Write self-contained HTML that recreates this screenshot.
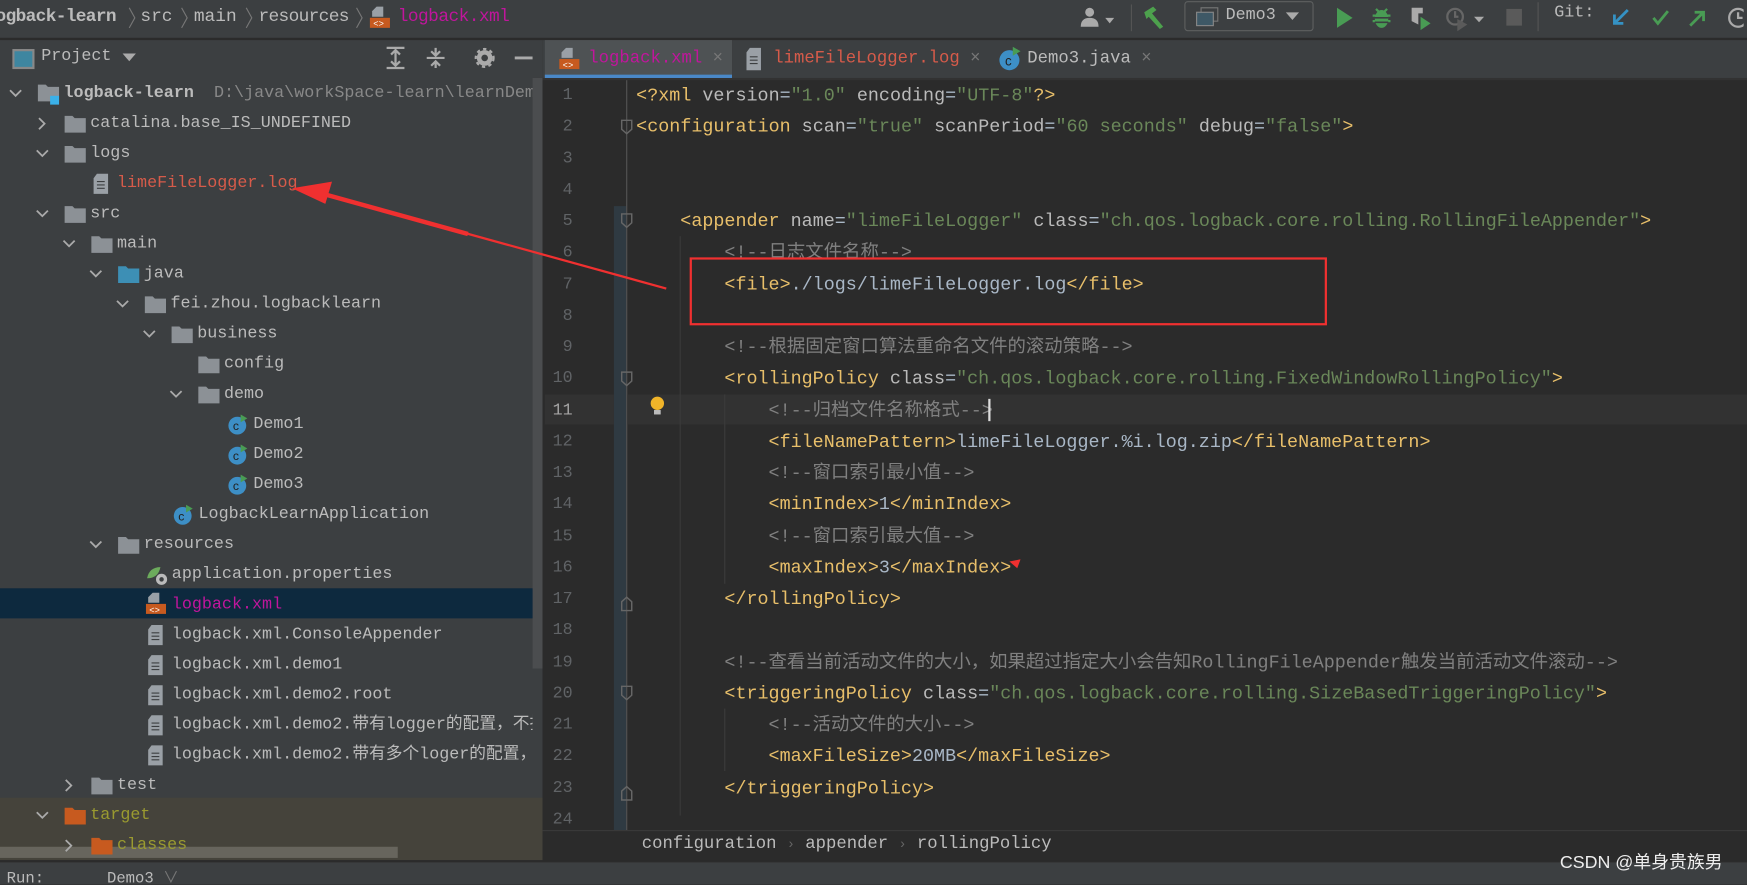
<!DOCTYPE html>
<html><head><meta charset="utf-8"><style>
html,body{margin:0;padding:0;width:1747px;height:884px;overflow:hidden;background:#2b2b2b}
#w{position:absolute;left:0;top:0;width:1568px;height:794px;transform:scale(1.11416);transform-origin:0 0;overflow:hidden;background:#2b2b2b;font-family:"Liberation Mono","Noto Sans CJK SC",monospace}
.a{position:absolute;white-space:nowrap}
.t{color:#bbbbbb;font-size:15px;line-height:27px;height:27px}
.c{font-size:16.5px;line-height:28px;color:#a9b7c6;white-space:pre !important}
.tg{color:#e8bf6a}.at{color:#bababa}.v{color:#6a8759}.cm{color:#808080}
.ln{position:absolute;left:490px;width:24px;text-align:right;color:#606366;font-size:15px;line-height:28px}
.bc{position:absolute;top:4px;font-size:16px;color:#bbb;line-height:22px;white-space:nowrap}
.sep{position:absolute;top:4px;font-size:16px;color:#777;line-height:22px}
</style></head><body><div id="w">
<!-- top bar -->
<div class="a" style="left:0;top:0;width:1568px;height:34px;background:#3c3f41"></div>
<div class="a" style="left:0;top:34px;width:1568px;height:2px;background:#2b2b2b"></div>
<div class="bc" style="left:-4px;font-weight:bold;letter-spacing:-0.6px">ogback-learn</div>
<svg class="a" style="left:114px;top:6px" width="10" height="20"><path d="M2 1l5 9-5 9" stroke="#777" fill="none"/></svg>
<div class="bc" style="left:126px">src</div>
<svg class="a" style="left:161px;top:6px" width="10" height="20"><path d="M2 1l5 9-5 9" stroke="#777" fill="none"/></svg>
<div class="bc" style="left:174px">main</div>
<svg class="a" style="left:219px;top:6px" width="10" height="20"><path d="M2 1l5 9-5 9" stroke="#777" fill="none"/></svg>
<div class="bc" style="left:232px;letter-spacing:-0.6px">resources</div>
<svg class="a" style="left:318px;top:6px" width="10" height="20"><path d="M2 1l5 9-5 9" stroke="#777" fill="none"/></svg>
<svg class="a" style="left:331px;top:5px" width="20" height="22"><path d="M7 1h6v9H3V5z" fill="#9aa0a6"/><rect x="1" y="11" width="18" height="9" fill="#c75a1f"/><text x="4" y="19" font-size="8" fill="#fff" font-family="Liberation Mono">&lt;&gt;</text></svg>
<div class="bc" style="left:357px;color:#c0169c;letter-spacing:-0.5px">logback.xml</div>
<svg class="a" style="left:966px;top:4px" width="40" height="24"><circle cx="12" cy="7" r="4" fill="#aaa"/><path d="M4 20q0-8 8-8 8 0 8 8z" fill="#aaa"/><path d="M26 12h8l-4 5z" fill="#aaa"/></svg>
<div class="a" style="left:1015px;top:4px;width:1px;height:24px;background:#555"></div>
<svg class="a" style="left:1024px;top:4px" width="24" height="24"><path d="M3 7l8-5 3 3-4 3 10 12-3 2-10-11-2 2z" fill="#4da14d"/></svg>
<div class="a" style="left:1063px;top:1px;width:116px;height:27px;border:1px solid #5e6060;border-radius:3px;box-sizing:border-box"></div>
<svg class="a" style="left:1073px;top:6px" width="22" height="18"><rect x="5" y="1" width="15" height="12" fill="none" stroke="#777"/><rect x="1" y="5" width="15" height="12" fill="#3e5866" stroke="#888"/></svg>
<div class="a" style="left:1100px;top:4px;font-size:15px;color:#bbb;line-height:20px">Demo3</div>
<svg class="a" style="left:1154px;top:11px" width="12" height="8"><path d="M0 0h12l-6 7z" fill="#aaa"/></svg>
<svg class="a" style="left:1197px;top:5px" width="20" height="22"><path d="M3 2l14 9-14 9z" fill="#499c54"/></svg>
<svg class="a" style="left:1230px;top:5px" width="20" height="22"><ellipse cx="10" cy="12" rx="6" ry="8" fill="#499c54"/><path d="M2 9h16M2 14h16M5 3l3 3M15 3l-3 3" stroke="#499c54" stroke-width="2"/><path d="M4 11h12M4 15h12" stroke="#3c3f41" stroke-width="1.5"/></svg>
<svg class="a" style="left:1264px;top:5px" width="24" height="24"><path d="M3 2h10v5H9v10l-6-3z" fill="#aaa"/><path d="M11 10l9 6-9 6z" fill="#499c54"/></svg>
<svg class="a" style="left:1297px;top:5px" width="36" height="24"><circle cx="9" cy="10" r="7" fill="none" stroke="#666" stroke-width="2"/><path d="M9 5v5h3" stroke="#666" stroke-width="2" fill="none"/><path d="M11 12l9 5-9 6z" fill="#5a5a5a"/><path d="M26 10h9l-4.5 5z" fill="#aaa"/></svg>
<div class="a" style="left:1352px;top:8px;width:14px;height:15px;background:#5a5a5a"></div>
<div class="a" style="left:1380px;top:2px;width:1px;height:26px;background:#555"></div>
<div class="a" style="left:1395px;top:2px;font-size:15px;color:#bbb;line-height:20px">Git:</div>
<svg class="a" style="left:1445px;top:5px" width="120" height="22"><path d="M16 4L4 16M4 8v8h8" stroke="#3592c4" stroke-width="2.5" fill="none"/><path d="M39 11l4 5 9-11" stroke="#499c54" stroke-width="2.5" fill="none"/><path d="M72 18L84 6M76 6h8v8" stroke="#499c54" stroke-width="2.5" fill="none"/><circle cx="115" cy="11" r="8" fill="none" stroke="#aaa" stroke-width="2"/><path d="M115 6v5h4" stroke="#aaa" stroke-width="2" fill="none"/></svg>

<!-- left panel -->
<div class="a" style="left:0;top:36px;width:487px;height:736px;background:#3c3f41"></div>
<svg class="a" style="left:11px;top:43px" width="20" height="20"><rect x="1" y="2" width="18" height="16" fill="#3e86a0" stroke="#888" stroke-width="2"/></svg>
<div class="a" style="left:37px;top:41px;font-size:15px;color:#bbb;line-height:20px">Project</div>
<svg class="a" style="left:110px;top:48px" width="14" height="9"><path d="M0 0h12l-6 7z" fill="#aaa"/></svg>
<svg class="a" style="left:345px;top:41px" width="140" height="22"><path d="M2 2h16M2 20h16M10 5v12M6 8l4-4 4 4M6 14l4 4 4-4" stroke="#aaa" stroke-width="2" fill="none"/><path d="M38 11h16M46 2v6M46 14v6M42 5l4 4 4-4M42 18l4-4 4 4" stroke="#aaa" stroke-width="2" fill="none"/><circle cx="90" cy="11" r="5" fill="none" stroke="#aaa" stroke-width="4"/><circle cx="90" cy="11" r="8" fill="none" stroke="#aaa" stroke-width="2" stroke-dasharray="3 3"/><path d="M117 11h16" stroke="#aaa" stroke-width="2.5"/></svg>
<div class="a" style="left:478px;top:70px;width:9px;height:530px;background:#4b4d4f"></div>
<div class="a" style="left:0;top:528px;width:478px;height:27px;background:#0d293e"></div>
<div class="a" style="left:0;top:716px;width:487px;height:56px;background:#45433b"></div>
<div class="a" style="left:0;top:760px;width:357px;height:10px;background:#67655d"></div>

<div id="tree"></div>

<!-- editor -->
<div class="a" style="left:487px;top:36px;width:1081px;height:34px;background:#3c3f41"></div>
<div class="a" style="left:489px;top:36px;width:168px;height:34px;background:#4e5254"></div>
<div class="a" style="left:489px;top:67px;width:168px;height:4px;background:#4a88c7"></div>
<svg class="a" style="left:501px;top:42px" width="20" height="22"><path d="M7 1h6v9H3V5z" fill="#9aa0a6"/><rect x="1" y="11" width="18" height="9" fill="#c75a1f"/><text x="4" y="19" font-size="8" fill="#fff" font-family="Liberation Mono">&lt;&gt;</text></svg>
<div class="a" style="left:528px;top:41px;font-size:15.5px;color:#c0169c;line-height:22px">logback.xml <span style="color:#777">×</span></div>
<svg class="a" style="left:669px;top:42px" width="16" height="22"><path d="M4 1h10v20H1V5z" fill="#9aa0a6"/><path d="M4 9h7M4 12h7M4 15h7" stroke="#3c3f41"/></svg>
<div class="a" style="left:694px;top:41px;font-size:15.5px;color:#d65b4a;line-height:22px">limeFileLogger.log <span style="color:#777">×</span></div>
<svg class="a" style="left:896px;top:42px" width="22" height="22"><circle cx="10" cy="12" r="9" fill="#3d8fc6"/><text x="6" y="17" font-size="12" fill="#222" font-family="Liberation Sans">c</text><path d="M13 0l7 4-7 4z" fill="#499c54"/></svg>
<div class="a" style="left:922px;top:41px;font-size:15.5px;color:#bbb;line-height:22px">Demo3.java <span style="color:#777">×</span></div>
<div class="a" style="left:487px;top:70px;width:1081px;height:2px;background:#323232"></div>
<div class="a" style="left:487px;top:72px;width:75px;height:673px;background:#2b2b2b"></div>
<div class="a" style="left:551px;top:185px;width:11px;height:560px;background:#2f3a42"></div>
<div class="a" style="left:562px;top:72px;width:1px;height:673px;background:#555"></div>
<div class="a" style="left:563px;top:354px;width:1005px;height:27px;background:#323232"></div>
<div class="a" style="left:489px;top:354px;width:62px;height:27px;background:#323232"></div>
<div class="a" style="left:610px;top:212px;width:1px;height:520px;background:#3b3b3b"></div>
<div class="a" style="left:650px;top:354px;width:1px;height:170px;background:#3b3b3b"></div>
<div class="a" style="left:650px;top:636px;width:1px;height:56px;background:#3b3b3b"></div>
<div id="ed"></div>
<!-- fold markers -->
<svg class="a" style="left:556px;top:106px" width="14" height="620"><g fill="none" stroke="#666" stroke-width="1.3"><path d="M2 2h9v8l-4.5 4L2 10z"/><path d="M2 86h9v8l-4.5 4L2 94z"/><path d="M2 228h9v8l-4.5 4L2 236z"/><path d="M2 434l4.5-4 4.5 4v8H2z"/><path d="M2 510h9v8l-4.5 4L2 518z"/><path d="M2 604l4.5-4 4.5 4v8H2z"/></g></svg>
<svg class="a" style="left:581px;top:355px" width="18" height="20"><circle cx="9" cy="7" r="6" fill="#f0b429"/><rect x="6" y="13" width="6" height="4" fill="#bbb"/></svg>
<div class="a" style="left:887px;top:358px;width:2px;height:20px;background:#ddd"></div>
<svg class="a" style="left:906px;top:502px" width="12" height="10"><path d="M0 2l10 -2-3 8z" fill="#f03030"/></svg>
<!-- red box & arrow -->
<div class="a" style="left:619px;top:231px;width:572px;height:61px;border:2px solid #f03030;box-sizing:border-box"></div>
<svg class="a" style="left:0;top:0" width="1568" height="794"><path d="M598 259L290 174" stroke="#f03030" stroke-width="2"/><path d="M420 210L290 174" stroke="#f03030" stroke-width="4"/><path d="M262 169l36-6-6 20z" fill="#f03030"/></svg>
<!-- bottom breadcrumb -->
<div class="a" style="left:487px;top:745px;width:1081px;height:27px;background:#2b2b2b;border-top:1px solid #3a3a3a"></div>
<div class="a" style="left:576px;top:746px;font-size:15.5px;color:#bbb;line-height:22px">configuration <span style="color:#666;font-size:12px">›</span> appender <span style="color:#666;font-size:12px">›</span> rollingPolicy</div>
<div class="a" style="left:0;top:772px;width:1568px;height:2px;background:#2b2b2b"></div>
<div class="a" style="left:0;top:774px;width:1568px;height:20px;background:#3c3f41"></div>
<div class="a" style="left:6px;top:780px;font-size:14px;color:#bbb;line-height:18px">Run:</div>
<div class="a" style="left:96px;top:780px;font-size:14px;color:#bbb;line-height:18px">Demo3 <span style="color:#777">∨</span></div>
<div class="a" style="left:1400px;top:764px;font-size:16px;color:#eee;font-family:'Liberation Sans','Noto Sans CJK SC',sans-serif;line-height:22px">CSDN @单身贵族男</div>
</div>
<script>
var F='<svg width="22" height="18" style="position:absolute;top:5px;left:0"><path d="M1 2h7l2 2h10v13H1z" fill="COL"/></svg>';
var DOC='<svg width="16" height="20" style="position:absolute;top:4px;left:2px"><path d="M4 1h10v18H1V5z" fill="#9aa0a6"/><path d="M4 8h7M4 11h7M4 14h7" stroke="#3c3f41"/></svg>';
var CLS='<svg width="22" height="22" style="position:absolute;top:3px;left:0"><circle cx="10" cy="12" r="8" fill="#3d8fc6"/><text x="6" y="16" font-size="11" fill="#222" font-family="Liberation Sans">c</text><path d="M13 2l6 3.5-6 3.5z" fill="#499c54"/></svg>';
var XML='<svg width="20" height="22" style="position:absolute;top:2px;left:0"><path d="M7 1h6v9H3V5z" fill="#9aa0a6"/><rect x="1" y="11" width="18" height="9" fill="#c75a1f"/><text x="4" y="19" font-size="8" fill="#fff" font-family="Liberation Mono">&lt;&gt;</text></svg>';
var PROP='<svg width="22" height="22" style="position:absolute;top:3px;left:0"><path d="M2 14q2-10 12-10-2 10-12 10z" fill="#6cab5c"/><circle cx="15" cy="15" r="5" fill="#bbb"/><circle cx="15" cy="15" r="2" fill="#3c3f41"/></svg>';
function fold(c){return F.replace('COL',c)}
var rows=[
[0,'v','proj','<b>logback-learn</b> &nbsp;<span style="color:#888">D:\\java\\workSpace-learn\\learnDemo</span>'],
[1,'>',fold('#8c9196'),'catalina.base_IS_UNDEFINED'],
[1,'v',fold('#8c9196'),'logs'],
[2,'',DOC,'<span style="color:#d65b4a">limeFileLogger.log</span>'],
[1,'v',fold('#8c9196'),'src'],
[2,'v',fold('#8c9196'),'main'],
[3,'v',fold('#3d8fb5'),'java'],
[4,'v',fold('#8c9196'),'fei.zhou.logbacklearn'],
[5,'v',fold('#8c9196'),'business'],
[6,'',fold('#8c9196'),'config'],
[6,'v',fold('#8c9196'),'demo'],
[7.1,'',CLS,'Demo1'],[7.1,'',CLS,'Demo2'],[7.1,'',CLS,'Demo3'],
[5.05,'',CLS,'LogbackLearnApplication'],
[3,'v',fold('#8c9196'),'resources'],
[4.05,'',PROP,'application.properties'],
[4.05,'',XML,'<span style="color:#c0169c">logback.xml</span>'],
[4.05,'',DOC,'logback.xml.ConsoleAppender'],
[4.05,'',DOC,'logback.xml.demo1'],
[4.05,'',DOC,'logback.xml.demo2.root'],
[4.05,'',DOC,'logback.xml.demo2.带有logger的配置，不打'],
[4.05,'',DOC,'logback.xml.demo2.带有多个loger的配置，'],
[2,'>',fold('#8c9196'),'test'],
[1,'v',fold('#c75a1f'),'<span style="color:#9a9a30">target</span>'],
[2,'>',fold('#c75a1f'),'<span style="color:#9a9a30">classes</span>']];
var h='';
rows.forEach(function(r,i){
 var top=70+27*i, lv=r[0], icx=33+24*lv;
 h+='<div class="a t" style="left:0;top:'+top+'px;width:478px;overflow:hidden">';
 if(r[1]){var cx=8+24*lv;h+='<svg style="position:absolute;left:'+cx+'px;top:8px" width="12" height="12">'+(r[1]=='v'?'<path d="M1 3l5 5 5-5" stroke="#aaa" stroke-width="1.6" fill="none"/>':'<path d="M3 1l5 5-5 5" stroke="#aaa" stroke-width="1.6" fill="none"/>')+'</svg>';}
 var ic=r[2]=='proj'?'<svg width="22" height="20" style="position:absolute;top:4px;left:0"><path d="M1 2h7l2 2h10v13H1z" fill="#8c9196"/><rect x="12" y="12" width="8" height="8" fill="#3ab0e8"/></svg>':r[2];
 h+='<div style="position:absolute;left:'+icx+'px;top:0;width:22px;height:27px">'+ic+'</div>';
 h+='<div style="position:absolute;left:'+(icx+24)+'px;top:0;font-family:\'Liberation Mono\',\'Noto Sans CJK SC\',monospace">'+r[3]+'</div></div>';
});
document.getElementById('tree').innerHTML=h;
function T(s){return '<span class="tg">'+s+'</span>'}
function A(s){return '<span class="at">'+s+'</span>'}
function V(s){return '<span class="v">'+s+'</span>'}
function C(s){return '<span class="cm">'+s+'</span>'}
var L={1:[0,T('&lt;?xml ')+A('version')+'='+V('"1.0"')+' '+A('encoding')+'='+V('"UTF-8"')+T('?&gt;')],
2:[0,T('&lt;configuration ')+A('scan')+'='+V('"true"')+' '+A('scanPeriod')+'='+V('"60 seconds"')+' '+A('debug')+'='+V('"false"')+T('&gt;')],
5:[1,T('&lt;appender ')+A('name')+'='+V('"limeFileLogger"')+' '+A('class')+'='+V('"ch.qos.logback.core.rolling.RollingFileAppender"')+T('&gt;')],
6:[2,C('&lt;!--日志文件名称--&gt;')],
7:[2,T('&lt;file&gt;')+'./logs/limeFileLogger.log'+T('&lt;/file&gt;')],
9:[2,C('&lt;!--根据固定窗口算法重命名文件的滚动策略--&gt;')],
10:[2,T('&lt;rollingPolicy ')+A('class')+'='+V('"ch.qos.logback.core.rolling.FixedWindowRollingPolicy"')+T('&gt;')],
11:[3,C('&lt;!--归档文件名称格式--&gt;')],
12:[3,T('&lt;fileNamePattern&gt;')+'limeFileLogger.%i.log.zip'+T('&lt;/fileNamePattern&gt;')],
13:[3,C('&lt;!--窗口索引最小值--&gt;')],
14:[3,T('&lt;minIndex&gt;')+'1'+T('&lt;/minIndex&gt;')],
15:[3,C('&lt;!--窗口索引最大值--&gt;')],
16:[3,T('&lt;maxIndex&gt;')+'3'+T('&lt;/maxIndex&gt;')],
17:[2,T('&lt;/rollingPolicy&gt;')],
19:[2,C('&lt;!--查看当前活动文件的大小，如果超过指定大小会告知RollingFileAppender触发当前活动文件滚动--&gt;')],
20:[2,T('&lt;triggeringPolicy ')+A('class')+'='+V('"ch.qos.logback.core.rolling.SizeBasedTriggeringPolicy"')+T('&gt;')],
21:[3,C('&lt;!--活动文件的大小--&gt;')],
22:[3,T('&lt;maxFileSize&gt;')+'20MB'+T('&lt;/maxFileSize&gt;')],
23:[2,T('&lt;/triggeringPolicy&gt;')]};
var e='';
for(var n=1;n<=24;n++){var y=72+(n-1)*28.26;
 e+='<div class="ln" style="top:'+y+'px;'+(n==11?'color:#a4a3a3':'')+'">'+n+'</div>';
 if(L[n])e+='<div class="a c" style="left:'+(571+L[n][0]*39.6)+'px;top:'+y+'px;font-family:\'Liberation Mono\',\'Noto Sans CJK SC\',monospace">'+L[n][1]+'</div>';}
document.getElementById('ed').innerHTML=e;
</script>
</body></html>
